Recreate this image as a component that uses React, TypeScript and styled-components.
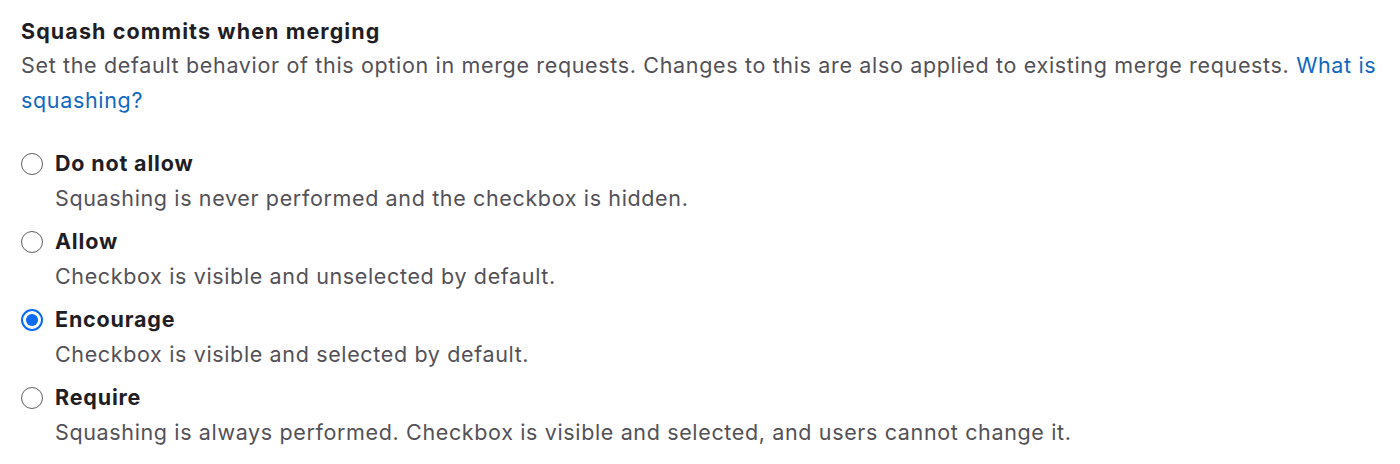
import React from "react";
import styled, { createGlobalStyle } from "styled-components";

const Global = createGlobalStyle`
  html, body { margin: 0; padding: 0; background: #ffffff; }
  body { font-family: Inter, "Noto Sans", "Liberation Sans", sans-serif; -webkit-font-smoothing: antialiased; }
`;

const Section = styled.section`
  padding: 14px 0 0 21px;
  width: 1375px;
`;

const Title = styled.h4`
  margin: 0;
  font-size: 21.5px;
  line-height: 34px;
  font-weight: 700;
  letter-spacing: 1.1px;
  color: #1f1e24;
`;

const Description = styled.p`
  margin: 0;
  font-size: 21.5px;
  line-height: 35px;
  letter-spacing: 0.66px;
  color: #535158;
  white-space: nowrap;
`;

const Link = styled.a`
  color: #1068bf;
  text-decoration: none;
`;

const Options = styled.div`
  margin-top: 28px;
  display: flex;
  flex-direction: column;
  gap: 8px;
`;

const Option = styled.label`
  display: grid;
  grid-template-columns: 22px 1fr;
  column-gap: 12px;
  cursor: pointer;
`;

const RadioCell = styled.span`
  height: 35px;
  display: flex;
  align-items: center;
`;

const Radio = styled.span<{ $checked?: boolean }>`
  box-sizing: border-box;
  width: 22px;
  height: 22px;
  border-radius: 50%;
  border: ${(p) => (p.$checked ? "2px solid #0a6cf5" : "1.5px solid #5f5e64")};
  background: #ffffff;
  display: flex;
  align-items: center;
  justify-content: center;
  &::after {
    content: "";
    display: ${(p) => (p.$checked ? "block" : "none")};
    width: 12px;
    height: 12px;
    border-radius: 50%;
    background: #0a6cf5;
  }
`;

const Texts = styled.span`
  display: flex;
  flex-direction: column;
`;

const Label = styled.span`
  font-size: 21.5px;
  line-height: 35px;
  font-weight: 700;
  letter-spacing: 0.82px;
  color: #1f1e24;
`;

const Help = styled.span`
  font-size: 21.5px;
  line-height: 35px;
  letter-spacing: 0.64px;
  color: #535158;
`;

const options = [
  { label: "Do not allow", help: "Squashing is never performed and the checkbox is hidden." },
  { label: "Allow", help: "Checkbox is visible and unselected by default." },
  { label: "Encourage", help: "Checkbox is visible and selected by default.", checked: true },
  {
    label: "Require",
    help: "Squashing is always performed. Checkbox is visible and selected, and users cannot change it.",
  },
];

export default function App() {
  return (
    <>
      <Global />
      <Section>
        <Title>Squash commits when merging</Title>
        <Description>
          Set the default behavior of this option in merge requests. Changes to this are also applied to existing merge
          requests. <Link href="#">What is<br />squashing?</Link>
        </Description>
        <Options>
          {options.map((o) => (
            <Option key={o.label}>
              <RadioCell>
                <Radio $checked={o.checked} />
              </RadioCell>
              <Texts>
                <Label>{o.label}</Label>
                <Help>{o.help}</Help>
              </Texts>
            </Option>
          ))}
        </Options>
      </Section>
    </>
  );
}
